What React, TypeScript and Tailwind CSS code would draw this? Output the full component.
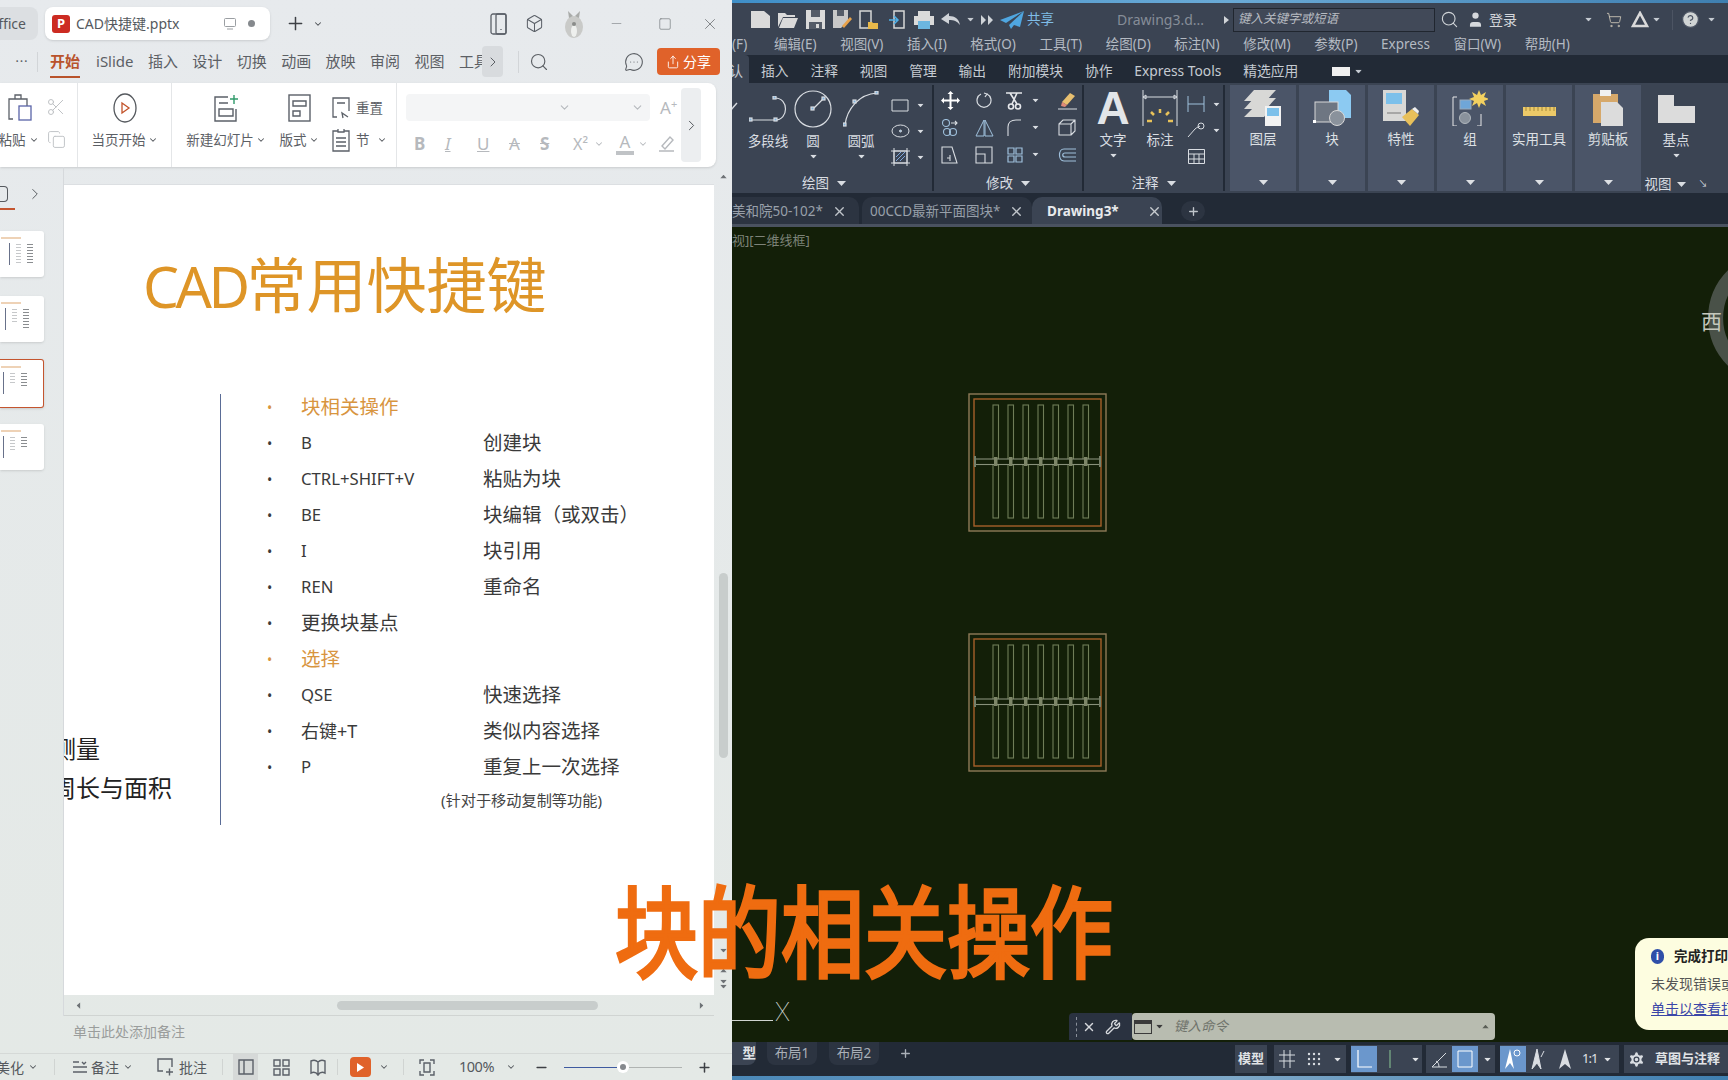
import React from 'react';
import { Plus, ChevronDown, ChevronRight, X, Minus, Square, Search, Box, Scissors, Copy, Share, MessageCircleMore, Settings, ShoppingCart, User, Wrench, CircleHelp } from 'lucide-react';

const Caret = ({ className = '' }: { className?: string }) => (
  <svg width="9" height="5" viewBox="0 0 9 5" className={`shrink-0 ${className}`}><path d="M0 0h9L4.5 5z" fill="currentColor" /></svg>
);

const Chev = ({ className = '' }: { className?: string }) => <ChevronDown size={10} strokeWidth={2.5} className={`shrink-0 text-[#55595e] ${className}`} />;

const Line = ({ d, s = '#5b6068', w = 24, h = 24, sw = 1.4 }: { d: string; s?: string; w?: number; h?: number; sw?: number }) => (
  <svg width={w} height={h} viewBox={`0 0 ${w} ${h}`} fill="none" stroke={s} strokeWidth={sw}><path d={d} /></svg>
);

const RibbonCol = ({ className, icon, label }: { className: string; icon: React.ReactNode; label: React.ReactNode }) => (
  <div className={`flex flex-col items-center pt-[9px] ${className}`}>
    <div className="flex h-[32px] items-center justify-center">{icon}</div>
    <div className="mt-[6px] flex h-[20px] items-center gap-[2px] whitespace-nowrap text-[13.5px] text-[#5c6065]">{label}</div>
  </div>
);

const MENU_TABS = ['iSlide', '插入', '设计', '切换', '动画', '放映', '审阅', '视图'];

const PptTop = () => (
  <>
    <div className="flex h-[47px] items-center">
      <div className="flex h-[33px] w-[38px] items-center justify-end overflow-hidden rounded-r-lg bg-[#dcdfe2] pr-[12px] text-[14px] text-[#55595e]"><span className="whitespace-nowrap">ffice</span></div>
      <div className="ml-[7px] flex h-[33px] w-[225px] items-center rounded-lg bg-white pl-[7px] shadow-sm">
        <div className="flex h-[18px] w-[18px] items-center justify-center rounded-[3px] bg-[#cc2b22] text-[13px] font-bold text-white">P</div>
        <span className="ml-[6px] w-[147px] text-[14px] text-[#55595e]">CAD快捷键.pptx</span>
        <svg width="14" height="14" viewBox="0 0 14 14" fill="none" stroke="#9a9ea2"><rect x="1.5" y="1.5" width="11" height="8" rx="1" /><path d="M4 12h6" /></svg>
        <span className="ml-[11px] h-[7px] w-[7px] rounded-full bg-[#85898d]" />
      </div>
      <Plus size={21} strokeWidth={1.7} className="ml-[15px] text-[#3d4045]" />
      <Chev className="ml-[7px] !text-[#4b4f54]" />
      <svg className="ml-[167px]" width="18" height="22" viewBox="0 0 18 22" fill="none" stroke="#5b6068" strokeWidth="1.3"><rect x="1" y="1" width="15" height="20" rx="2" /><rect x="6" y="1" width="10" height="20" rx="1.5" /><path d="M11 16v1" /></svg>
      <Box size={19} strokeWidth={1.3} className="ml-[17px] text-[#5b6068]" />
      <svg className="ml-[19px]" width="22" height="30" viewBox="0 0 22 30"><ellipse cx="11" cy="18" rx="9" ry="11" fill="#c9cac8" /><path d="M6 9 5 2l5 5zM16 9l1-7-5 5z" fill="#a9aba9" /><ellipse cx="11" cy="22" rx="3" ry="6" fill="#eef0ee" /><circle cx="11" cy="15" r="2" fill="#8a8c8a" /></svg>
      <Minus size={15} strokeWidth={1.2} className="ml-[24px] text-[#8d9195]" />
      <Square size={14} strokeWidth={1.1} className="ml-[34px] text-[#6e7276]" />
      <X size={18} strokeWidth={1.1} className="ml-[29px] text-[#6e7276]" />
    </div>
    <div className="flex h-[36px] items-center pb-[7px] text-[15px] text-[#5c6065]">
      <span className="ml-[7px] w-[30px] text-center text-[13px] tracking-[1px]">⋯</span>
      <span className="h-[20px] w-px bg-[#d2d5d8]" />
      <span className="relative ml-[12px] font-bold text-[#b9532c] after:absolute after:inset-x-0 after:bottom-[-5px] after:h-[2px] after:bg-[#b9532c]">开始</span>
      <div className="ml-[16px] flex w-[363px] gap-[14.4px]">
        {MENU_TABS.map(t => <span key={t}>{t}</span>)}
      </div>
      <div className="flex h-[31px] w-[44px] items-center overflow-hidden">
        <span className="w-[23px] shrink-0 overflow-hidden whitespace-nowrap">工具</span>
        <span className="flex h-[31px] w-[21px] shrink-0 items-center justify-center rounded-sm bg-[#d8dbde]"><ChevronRight size={16} strokeWidth={1.5} /></span>
      </div>
      <span className="ml-[15px] h-[22px] w-px bg-[#d2d5d8]" />
      <Search size={20} strokeWidth={1.4} className="ml-[10px]" />
      <MessageCircleMore size={20} strokeWidth={1.3} className="ml-[75px]" />
      <div className="ml-[13px] flex h-[27px] w-[63px] items-center justify-center gap-[3px] rounded bg-[#e0622a] text-[14px] text-white">
        <Share size={14} strokeWidth={1.5} />分享
      </div>
    </div>
  </>
);

const PptRibbon = () => (
  <div className="flex h-[84px] w-[716px] rounded-r-lg bg-white shadow-sm">
    <div className="flex w-[78px] border-r border-[#e4e6e8]">
      <RibbonCol className="w-[40px]" label={<><span className="ml-[-3px] w-[28px] overflow-hidden whitespace-nowrap">粘贴</span><Chev /></>} icon={
        <svg width="24" height="28" viewBox="0 0 24 28" fill="none" stroke="#5b6068" strokeWidth="1.3"><path d="M5 25H1V5h18v7M7 5V1h6v4" /><rect x="11" y="12" width="12" height="14" stroke="#5a64a8" /></svg>
      } />
      <div className="ml-[6px] flex flex-col items-center pt-[14px] text-[#bfc2c5]">
        <Scissors size={20} strokeWidth={1.2} />
        <Copy size={19} strokeWidth={1.2} className="mt-[13px]" />
      </div>
    </div>
    <RibbonCol className="w-[94px] border-r border-[#e4e6e8]" label={<>当页开始<Chev /></>} icon={
      <svg width="24" height="30" viewBox="0 0 24 30" fill="none"><ellipse cx="12" cy="15" rx="11" ry="14" stroke="#55595e" strokeWidth="1.3" /><path d="M9 10l7 5-7 5z" stroke="#c2532a" strokeWidth="1.3" /></svg>
    } />
    <RibbonCol className="w-[108px]" label={<>新建幻灯片<Chev /></>} icon={
      <svg width="24" height="28" viewBox="0 0 24 28" fill="none" stroke="#5b6068" strokeWidth="1.4"><path d="M14 3H1v24h21v-12M5 9h9M5 15h14v7H5z" /><path d="M20 1v9M16 5h9" stroke="#2f9a6a" /></svg>
    } />
    <RibbonCol className="w-[38px]" label={<>版式<Chev /></>} icon={
      <svg width="23" height="28" viewBox="0 0 23 28" fill="none" stroke="#5b6068" strokeWidth="1.4"><rect x="1" y="1" width="21" height="26" /><path d="M5 7h13v5H5zM5 17h7v5H5z" /></svg>
    } />
    <div className="ml-[14px] flex w-[58px] flex-col whitespace-nowrap pt-[11px] text-[13.5px] text-[#5c6065]">
      <div className="flex h-[28px] items-center gap-[6px]">
        <svg width="18" height="22" viewBox="0 0 18 22" fill="none" stroke="#5b6068" strokeWidth="1.3"><path d="M5 20H1V1h16v13M5 6h8M16 20l-6-4 1 5" /></svg>
        <span>重置</span>
      </div>
      <div className="mt-[8px] flex h-[20px] items-center gap-[6px]">
        <svg width="18" height="24" viewBox="0 0 18 24" fill="none" stroke="#5b6068" strokeWidth="1.3"><path d="M6 3H1v20h16V3h-5M6 1v3h6V1M4 10h10M4 14h10M4 18h10" /></svg>
        <span className="w-[14px]">节</span><Chev className="ml-[1px]" />
      </div>
    </div>
    <div className="ml-[6px] flex w-[285px] flex-col border-l border-[#e4e6e8] pl-[9px] pt-[11px] text-[#b6b9bd]">
      <div className="flex items-center">
        <div className="flex h-[27px] w-[244px] items-center rounded bg-[#f4f5f6]">
          <span className="flex w-[172px] justify-end pr-[7px]"><ChevronDown size={13} /></span>
          <span className="flex flex-1 justify-end pr-[6px]"><ChevronDown size={13} /></span>
        </div>
        <span className="ml-[10px] text-[17px]">A<sup className="text-[11px]">+</sup></span>
      </div>
      <div className="mt-[11px] flex h-[24px] items-center text-[17px]">
        <span className="ml-[8px] w-[31px] font-bold">B</span>
        <span className="w-[32px] italic underline">I</span>
        <span className="w-[32px] underline">U</span>
        <span className="w-[31px] line-through">A</span>
        <span className="w-[33px] font-bold line-through">S</span>
        <span className="w-[21px] text-[16px]">X²</span>
        <Chev className="!text-[#b6b9bd]" />
        <span className="ml-[12px] w-[18px] border-b-[4px] border-[#c0c3c6] text-center leading-[18px]">A</span>
        <Chev className="ml-[4px] !text-[#b6b9bd]" />
        <span className="ml-[9px]"><Line d="M2 17h15M5 12l8-9 3 3-8 9z" s="#b6b9bd" w={20} h={20} /></span>
      </div>
    </div>
    <div className="my-[5px] flex w-[20px] items-center justify-center rounded bg-[#eceef0] text-[#55595e]"><ChevronRight size={17} strokeWidth={1.4} /></div>
  </div>
);

const Thumb = ({ active, bar, c1, c2 }: { active?: boolean; bar: number; c1: number; c2: number }) => (
  <div className={`flex w-[44px] flex-col rounded-r-[3px] bg-white pt-[6px] shadow-sm ${active ? 'h-[49px] border border-l-0 border-[#c4552f]' : 'h-[46px]'}`}>
    <div className="ml-[1px] h-[2px] w-[20px] bg-[#eed2b6]" />
    <div className="mt-[4px] flex gap-[6px] pl-[3px]">
      <div className="h-[22px] w-px bg-[#68718a]" style={{ marginLeft: bar }} />
      <div className="flex flex-col gap-[2px] pt-[1px]">
        {Array.from({ length: c1 }).map((_, i) => <div key={i} className="h-px w-[5px] bg-[#c6c8ca]" />)}
      </div>
      <div className="flex flex-col gap-[2px] pt-[1px]">
        {Array.from({ length: c2 }).map((_, i) => <div key={i} className="h-px w-[6px] bg-[#8a8d90]" />)}
      </div>
    </div>
  </div>
);

const ROWS: [string, string?, boolean?][] = [
  ['块相关操作', undefined, true],
  ['B', '创建块'],
  ['CTRL+SHIFT+V', '粘贴为块'],
  ['BE', '块编辑（或双击）'],
  ['I', '块引用'],
  ['REN', '重命名'],
  ['更换块基点'],
  ['选择', undefined, true],
  ['QSE', '快速选择'],
  ['右键+T', '类似内容选择'],
  ['P', '重复上一次选择'],
];

const keyClass = (k: string) => (k === '右键+T' ? 'text-[18px]' : /^[A-Z+]+$/.test(k) ? 'text-[16.7px]' : 'text-[19.5px]');

const Slide = () => (
  <div className="h-[810px] w-[650px] overflow-hidden bg-white">
    <div className="ml-[79px] mt-[63px] h-[74px] whitespace-nowrap text-[60px] leading-[74px] text-[#de9527]">
      <span className="text-[57px] tracking-[-3.5px]">CAD</span><span>常用快捷键</span>
    </div>
    <div className="mt-[72px] flex">
      <div className="flex h-[431px] w-[156px] flex-col overflow-hidden pt-[335px] text-[24px] leading-[39px] text-[#222]">
        <span className="-ml-[12px] whitespace-nowrap">测量</span>
        <span className="-ml-[12px] whitespace-nowrap">周长与面积</span>
      </div>
      <div className="h-[431px] w-px bg-[#5a6c96]" />
      <div className="-mt-[5px] pl-[46px]">
        {ROWS.map(([a, b, hl]) => (
          <div key={a} className={`flex h-[36px] items-center ${hl ? 'text-[#d8953f]' : 'text-[#3a3a3a]'}`}>
            <span className="w-[34px] text-[14px]">•</span>
            <span className={`w-[182px] whitespace-nowrap ${keyClass(a)}`}>{a}</span>
            {b && <span className="whitespace-nowrap text-[19.5px]">{b}</span>}
          </div>
        ))}
        <div className="flex h-[30px] items-center pl-[174px] text-[15.2px] text-[#444]">(针对于移动复制等功能)</div>
      </div>
    </div>
  </div>
);

const PptPane = () => (
  <div className="flex w-[732px] flex-col bg-gradient-to-b from-[#e7eaed] to-[#e4e9e6]">
    <PptTop />
    <PptRibbon />
    <div className="flex h-[849px]">
      <div className="w-[64px] border-r border-[#d6d9dc]">
        <div className="flex h-[41px] items-center pt-[12px]">
          <span className="h-[16px] w-[8px] rounded-r-sm border border-l-0 border-[#55595e]" />
          <ChevronRight size={18} strokeWidth={1.3} className="ml-[18px] text-[#55595e]" />
        </div>
        <div className="h-[2px] w-[15px] bg-[#c4552f]" />
        <div className="mt-[21px] flex flex-col">
          <Thumb bar={6} c1={7} c2={7} />
          <div className="h-[19px]" />
          <Thumb bar={2} c1={5} c2={7} />
          <div className="h-[17px]" />
          <Thumb active bar={0} c1={4} c2={5} />
          <div className="h-[16px]" />
          <Thumb bar={0} c1={5} c2={4} />
        </div>
      </div>
      <div className="flex w-[650px] flex-col">
        <div className="h-[18px] border-b border-[#dcdfe2]" />
        <Slide />
        <div className="flex h-[21px] items-center border-b border-[#d0d4d2] text-[#6e7276]">
          <Caret className="ml-[10px] rotate-90 scale-75" />
          <div className="ml-[254px] h-[9px] w-[261px] rounded-full bg-[#c8cdcc]" />
          <Caret className="ml-[99px] -rotate-90 scale-75" />
        </div>
      </div>
      <div className="flex w-[18px] flex-col items-center text-[#6e7276]">
        <Caret className="mt-[7px] rotate-180 scale-75" />
        <div className="mt-[394px] h-[185px] w-[9px] rounded-full bg-[#c8cdcc]" />
        <Caret className="mt-[190px] scale-75" />
        <Caret className="mt-[10px] rotate-180 scale-75" />
        <Caret className="rotate-180 scale-75" />
        <Caret className="mt-[6px] scale-75" />
        <Caret className="scale-75" />
      </div>
    </div>
    <div className="ml-[64px] flex h-[37px] items-center pb-[6px] pl-[9px] text-[14px] text-[#9a9d9c]">单击此处添加备注</div>
    <div className="flex h-[27px] items-center border-t border-[#d5d9d7] text-[14px] text-[#55595e]">
      <span className="-ml-[4px] whitespace-nowrap">美化</span>
      <Chev className="ml-[4px]" />
      <span className="ml-[16px] h-[16px] w-px bg-[#d0d4d2]" />
      <span className="ml-[17px]"><Line d="M1 2h6M1 7h14M1 12h14M10 2l2 2 2-2" w={16} h={14} /></span>
      <span className="ml-[3px]">备注</span>
      <Chev className="ml-[4px]" />
      <span className="ml-[24px]"><Line d="M6 13H1V1h14v8M9 14h7M12.500 10.500v7" w={17} h={18} /></span>
      <span className="ml-[5px]">批注</span>
      <span className="ml-[15px] h-[16px] w-px bg-[#d0d4d2]" />
      <span className="ml-[10px] flex h-[27px] w-[25px] items-center justify-center bg-[#d6d9d8]"><Line d="M1 1h14v14H1zM6 1v14" w={16} h={16} /></span>
      <span className="ml-[15px]"><Line d="M1 1h6v6H1zM10 1h6v6h-6zM1 10h6v6H1zM10 10h6v6h-6z" w={17} h={17} /></span>
      <span className="ml-[20px]"><Line d="M8 3C6 1 3 1 1 2v12c2-1 5-1 7 2 2-3 5-3 7-2V2c-2-1-5-1-7 1zM8 3v13" w={16} h={17} /></span>
      <span className="ml-[11px] h-[16px] w-px bg-[#d0d4d2]" />
      <span className="ml-[12px] flex h-[20px] w-[21px] items-center justify-center rounded-sm bg-[#e0622a]"><svg width="7" height="9" viewBox="0 0 7 9"><path d="M0 0l7 4.500L0 9z" fill="#fff" /></svg></span>
      <Chev className="ml-[8px]" />
      <span className="ml-[14px] h-[16px] w-px bg-[#d0d4d2]" />
      <span className="ml-[15px]"><Line d="M1 5V1h4M11 1h4v4M15 12v4h-4M5 16H1v-4M5 4h6v9H5z" w={16} h={17} /></span>
      <span className="ml-[24px] text-[14.500px] tracking-[-0.5px]">100%</span>
      <Chev className="ml-[12px]" />
      <Minus size={15} strokeWidth={2.4} className="ml-[18px] text-[#3d4045]" />
      <div className="ml-[15px] flex w-[118px] items-center">
        <div className="h-px w-[53px] bg-[#3e5aa0]" />
        <div className="flex h-[12px] w-[12px] items-center justify-center rounded-full bg-white"><span className="h-[6px] w-[6px] rounded-full bg-[#85898d]" /></div>
        <div className="h-px flex-1 bg-[#b0b4b2]" />
      </div>
      <Plus size={15} strokeWidth={2.4} className="ml-[15px] text-[#3d4045]" />
    </div>
  </div>
);

/* ---------- CAD side ---------- */

const CAD_MENU = ['编辑(E)', '视图(V)', '插入(I)', '格式(O)', '工具(T)', '绘图(D)', '标注(N)', '修改(M)', '参数(P)', 'Express', '窗口(W)', '帮助(H)'];
const CAD_TABS = ['插入', '注释', '视图', '管理', '输出', '附加模块', '协作', 'Express Tools', '精选应用'];

const CadTop = () => (
  <>
    <div className="flex h-[30px] items-center bg-[#3b4453] pl-[14px] pt-[3px] text-[13px] text-[#c5cbd2]">
      <span className="flex w-[28px] justify-center"><svg width="19" height="17" viewBox="0 0 19 17"><path d="M0 0h13l6 5v12H0z" fill="#dadada" /></svg></span>
      <span className="flex w-[27px] justify-center"><svg width="20" height="17" viewBox="0 0 20 17"><path d="M0 2h7l2 2h8v2H5L0 16zM5 7h15l-4 10H1z" fill="#dadada" /></svg></span>
      <span className="flex w-[28px] justify-center"><svg width="19" height="19" viewBox="0 0 19 19"><path d="M0 0h19v19H0z" fill="#dadada" /><path d="M5 0h9v7H5zM3 12h13v7H3z" fill="#555c68" /><path d="M10 14h3v4h-3z" fill="#dadada" /></svg></span>
      <span className="flex w-[26px] justify-center"><svg width="19" height="19" viewBox="0 0 19 19"><path d="M0 0h15v11l-7 7H0z" fill="#c8c8c8" /><path d="M4 0h7v6H4z" fill="#555c68" /><path d="M9 16l8-9 2 2-8 9z" fill="#e8a24a" /></svg></span>
      <span className="flex w-[28px] justify-center"><svg width="20" height="20" viewBox="0 0 20 20"><rect x="1" y="1" width="11" height="17" fill="none" stroke="#d8d8d8" strokeWidth="1.5" /><path d="M9 12h4l1 1h5v6H9z" fill="#e8b84a" /></svg></span>
      <span className="flex w-[27px] justify-center"><svg width="16" height="20" viewBox="0 0 16 20" fill="none" stroke="#d8d8d8" strokeWidth="1.500"><rect x="5" y="1" width="10" height="17" /><path d="M0 10h8M5 6l4 4-4 4" stroke="#4fb0e8" /></svg></span>
      <span className="flex w-[27px] justify-center"><svg width="20" height="18" viewBox="0 0 20 18"><path d="M4 0h12v5H4zM0 5h20v9H0z" fill="#dadada" /><path d="M4 10h12v8H4z" fill="#6cb6e0" /></svg></span>
      <span className="flex w-[26px] justify-center"><svg width="19" height="13" viewBox="0 0 19 13"><path d="M0 6l8-6v3c6 0 10 3 11 9-3-4-6-5-11-5v4z" fill="#cfd3d8" /></svg></span>
      <span className="flex w-[14px] justify-center"><Caret className="scale-75" /></span>
      <span className="flex w-[20px] justify-center"><svg width="12" height="10" viewBox="0 0 12 10"><path d="M0 0l5 5-5 5zM7 0l5 5-5 5z" fill="#cfd3d8" /></svg></span>
      <span className="ml-[3px]"><svg width="24" height="18" viewBox="0 0 24 18"><path d="M24 0L0 9l6 3L24 0 9 14l2 4 3-4 6 2z" fill="#4fa6e0" /></svg></span>
      <span className="ml-[3px] text-[13.500px] text-[#7fbce6]">共享</span>
      <span className="ml-[63px] w-[107px] text-[14px] text-[#868d98]">Drawing3.d...</span>
      <svg width="5" height="8" viewBox="0 0 5 8"><path d="M0 0l5 4-5 4z" fill="#d0d4d8" /></svg>
      <div className="ml-[4px] flex h-[24px] w-[202px] items-center border border-[#20262f] bg-[#414958] pl-[4px] text-[12.500px] italic text-[#b8bcc2]">键入关键字或短语</div>
      <Search size={19} strokeWidth={1.4} className="ml-[5px] text-[#d0d4d8]" />
      <User size={19} fill="#d5d8dc" strokeWidth={0} className="ml-[7px]" />
      <span className="ml-[4px] text-[14px] text-[#d5d8dc]">登录</span>
      <Caret className="ml-[67px] scale-75" />
      <ShoppingCart size={16} strokeWidth={1.3} className="ml-[13px] text-[#d0c8b8]" />
      <svg className="ml-[9px]" width="18" height="17" viewBox="0 0 18 17" fill="none" stroke="#dadada" strokeWidth="2.600"><path d="M9 2L2 15h14z" /></svg>
      <Caret className="ml-[3px] scale-75" />
      <span className="ml-[11px] h-[20px] w-px bg-[#4c5463]" />
      <CircleHelp size={19} fill="#d0d4d4" stroke="#4c5463" strokeWidth={1.6} className="ml-[8px]" />
      <Caret className="ml-[7px] scale-75" />
    </div>
    <div className="flex h-[22px] items-center whitespace-nowrap bg-[#3b4453] text-[13.500px] text-[#b4bac2]">
      <span className="w-[19px]">(F)</span>
      <div className="ml-[23px] flex gap-[23.600px]">{CAD_MENU.map(m => <span key={m}>{m}</span>)}</div>
    </div>
    <div className="flex h-[28px] items-center whitespace-nowrap bg-[#222a36] pt-[4px] text-[13.800px] text-[#c5cbd2]">
      <span className="-mt-[4px] flex h-[28px] w-[17px] items-center justify-start rounded-tr bg-[#3b4453] pt-[4px]"><span className="flex w-[11px] justify-end overflow-hidden"><span className="shrink-0">认</span></span></span>
      <div className="ml-[12px] flex gap-[21.800px]">{CAD_TABS.map(t => <span key={t}>{t}</span>)}</div>
      <span className="ml-[34px] h-[9px] w-[18px] bg-[#f0f0f0]" />
      <Caret className="ml-[4px] scale-75" />
    </div>
  </>
);

const W = '#d9dde2';

const SmallTool = ({ icon, caret }: { icon: React.ReactNode; caret?: boolean }) => (
  <div className="flex h-[27px] items-center">
    <span className="flex w-[24px] justify-center">{icon}</span>
    {caret && <Caret className="ml-[4px] scale-[0.7] text-[#d9dde2]" />}
  </div>
);

const BigTool = ({ className, icon, label, caret = true }: { className: string; icon: React.ReactNode; label: string; caret?: boolean }) => (
  <div className={`flex flex-col items-center ${className}`}>
    <div className="flex h-[40px] items-center justify-center">{icon}</div>
    <span className="mt-[2px] text-[13.500px] leading-[20px] text-[#d9dde2]">{label}</span>
    {caret && <Caret className="mt-[3px] scale-75 text-[#d9dde2]" />}
  </div>
);

const PanelFoot = ({ label, className = '' }: { label: string; className?: string }) => (
  <div className={`flex h-[21px] items-center justify-center gap-[8px] pt-[6px] text-[13.500px] text-[#d9dde2] ${className}`}>{label}<Caret /></div>
);

const Collapsed = ({ label, icon }: { label: string; icon: React.ReactNode }) => (
  <div className="flex w-[66px] flex-col items-center bg-[#4b5568]">
    <div className="flex h-[41px] items-end justify-center">{icon}</div>
    <span className="mt-[3px] whitespace-nowrap text-[13.500px] leading-[20px] text-[#dde0e4]">{label}</span>
    <Caret className="mt-auto mb-[6px] text-[#dde0e4]" />
  </div>
);

const CadRibbon = () => (
  <div className="flex h-[110px] bg-[#3b4453] py-[2px]">
    <div className="flex w-[202px] flex-col border-r-2 border-[#222a36]">
      <div className="flex h-[85px] pt-[4px]">
        <BigTool className="w-[8px] overflow-hidden" caret={false} label="" icon={<Line d="M-3 15L5 6" s={W} w={8} h={24} />} />
        <BigTool className="ml-[7px] w-[42px]" caret={false} label="多段线" icon={
          <svg width="38" height="26" viewBox="0 0 38 26" fill="none" stroke={W} strokeWidth="1.2"><path d="M2 24h24c14 0 14-22 0-22" /><rect x="0" y="22" width="3" height="3" fill="#7fb2dc" /><rect x="25" y="22" width="3" height="3" fill="#7fb2dc" /><rect x="24" y="0" width="3" height="3" fill="#7fb2dc" /></svg>
        } />
        <BigTool className="ml-[5px] w-[38px]" label="圆" icon={
          <svg width="38" height="38" viewBox="0 0 38 38" fill="none" stroke={W} strokeWidth="1.2"><circle cx="19" cy="19" r="18" /><path d="M19 19L29 9" /><rect x="17" y="17" width="3" height="3" fill="#7fb2dc" /><rect x="28" y="7" width="3" height="3" fill="#7fb2dc" /></svg>
        } />
        <BigTool className="ml-[10px] w-[38px]" label="圆弧" icon={
          <svg width="36" height="36" viewBox="0 0 36 36" fill="none" stroke={W} strokeWidth="1.2"><path d="M2 34C4 18 16 3 34 2" /><rect x="0" y="32" width="3" height="3" fill="#7fb2dc" /><rect x="10" y="9" width="3" height="3" fill="#7fb2dc" /><rect x="32" y="0" width="3" height="3" fill="#7fb2dc" /></svg>
        } />
        <div className="ml-[8px] flex flex-col pt-[3px]">
          <SmallTool caret icon={<svg width="18" height="13" fill="none" stroke={W}><path d="M1 1h16v11H1z" /></svg>} />
          <SmallTool caret icon={<svg width="19" height="14" fill="none" stroke={W}><ellipse cx="9.500" cy="7" rx="8.500" ry="6" /><circle cx="9.500" cy="7" r="1" fill="#7fb2dc" /></svg>} />
          <SmallTool caret icon={<svg width="19" height="18" fill="none" stroke={W}><path d="M3 3h13v12H3z" /><path d="M5 13l9-9M5 9l5-5M9 13l5-5" stroke="#7fa6d8" /><path d="M0 3h19M0 15h19M3 0v18M16 0v18" /></svg>} />
        </div>
      </div>
      <PanelFoot label="绘图" className="pr-[16px]" />
    </div>
    <div className="flex w-[150px] flex-col border-r-2 border-[#222a36]">
      <div className="grid h-[85px] grid-cols-[34px_31px_52px_24px] content-center pl-[4px]">
        <SmallTool icon={<svg width="19" height="19" viewBox="0 0 19 19"><path d="M9.500 0l3 3h-2v5.500H16v-2l3 3-3 3v-2h-5.500V16h2l-3 3-3-3h2v-5.500H3v2l-3-3 3-3v2h5.500V3h-2z" fill="#fff" /></svg>} />
        <SmallTool icon={<svg width="17" height="17" viewBox="0 0 17 17" fill="none" stroke={W} strokeWidth="1.200"><path d="M11 2a7 7 0 1 1-6 0" /><path d="M8 1l3 1-2 3" /></svg>} />
        <SmallTool caret icon={<svg width="18" height="18" viewBox="0 0 18 18" fill="none" stroke="#e6e8ec" strokeWidth="1.600"><path d="M0 1h16M4 1l7 11M11 1L6 12" /><circle cx="5" cy="14.500" r="2.500" /><circle cx="12" cy="14.500" r="2.500" /></svg>} />
        <SmallTool icon={<svg width="19" height="18" viewBox="0 0 19 18"><path d="M12 1l5 3-8 9-5-3z" fill="#e8c070" /><path d="M4 10l5 3-2 2-4-1z" fill="#e08a78" /><path d="M0 17h19" stroke={W} /></svg>} />
        <SmallTool icon={<svg width="19" height="18" viewBox="0 0 19 18" fill="none" stroke="#9fc0dc" strokeWidth="1.100"><circle cx="5" cy="4" r="3.500" /><circle cx="6" cy="13" r="3.500" /><circle cx="12" cy="13" r="3.500" /><path d="M10 4h6M14 2l2 2-2 2" stroke={W} /></svg>} />
        <SmallTool icon={<svg width="19" height="18" viewBox="0 0 19 18" fill="none" stroke="#9fc0dc"><path d="M9 1L1 17h8zM10 1l8 16h-8z" /></svg>} />
        <SmallTool caret icon={<Line d="M1 17V8c0-4 3-7 8-7h5" s={W} w={16} h={18} sw={1.1} />} />
        <SmallTool icon={<svg width="18" height="17" viewBox="0 0 18 17" fill="none" stroke={W} strokeWidth="1.100"><path d="M1 5h12v11H1zM1 5l4-4h12v11l-4 4M13 5l4-4" /></svg>} />
        <SmallTool icon={<svg width="18" height="18" viewBox="0 0 18 18" fill="none" stroke={W} strokeWidth="1.100"><path d="M1 1h10l5 16H1zM9 9v6M6 12h3" /></svg>} />
        <SmallTool icon={<svg width="18" height="18" viewBox="0 0 18 18" fill="none" stroke={W} strokeWidth="1.100"><path d="M1 1h16v16H1zM1 8h9v9" /></svg>} />
        <SmallTool caret icon={<svg width="16" height="16" viewBox="0 0 16 16" fill="none" stroke="#9fc0dc" strokeWidth="1.200"><path d="M1 1h6v6H1zM9 1h6v6H9zM1 9h6v6H1zM9 9h6v6H9z" /></svg>} />
        <SmallTool icon={<svg width="18" height="14" viewBox="0 0 18 14" fill="none" stroke="#9fc0dc" strokeWidth="1.200"><path d="M18 1H6C0 1 0 13 6 13h12M18 5H7C4 5 4 9 7 9h11" /></svg>} />
      </div>
      <PanelFoot label="修改" />
    </div>
    <div className="flex w-[141px] flex-col border-r-2 border-[#222a36]">
      <div className="flex h-[85px] pt-[3px]">
        <BigTool className="w-[58px]" label="文字" icon={<span className="font-['Liberation_Sans'] text-[46px] font-bold leading-[44px] text-[#e2e5e8]">A</span>} />
        <BigTool className="w-[36px]" caret={false} label="标注" icon={
          <svg width="36" height="36" viewBox="0 0 36 36" fill="none" stroke={W}><path d="M1 0v36M35 0v36M1 7h34M1 7l3-2v4zM35 7l-3-2v4z" /><path d="M18 19v4M9 22l3 3M27 22l-3 3M5 31h5M26 31h5" stroke="#e8c25a" strokeWidth="2.500" /></svg>
        } />
        <div className="ml-[6px] flex flex-col pt-[3px]">
          <SmallTool caret icon={<svg width="18" height="16" fill="none" stroke="#9fc0dc"><path d="M1 0v16M17 0v16M1 8h16" /></svg>} />
          <SmallTool caret icon={<svg width="18" height="16" fill="none" stroke={W}><path d="M1 15l7-8c2-2 4-2 5-3" /><circle cx="14" cy="4" r="3" /></svg>} />
          <SmallTool icon={<svg width="17" height="15" fill="none" stroke={W}><path d="M.5.5h16v14H.5zM.5 5h16M.5 10h16M6 5v10M11 5v10" /></svg>} />
        </div>
      </div>
      <PanelFoot label="注释" />
    </div>
    <div className="ml-[5px] flex gap-[3px]">
      <Collapsed label="图层" icon={<svg width="38" height="36" viewBox="0 0 38 36"><path d="M10 0h22L22 11H0zM10 8h22L22 19H0zM10 17h18l-8 10H0z" fill="#d8d8d6" /><rect x="21" y="16" width="16" height="20" fill="#f2f2f2" /><rect x="23" y="18" width="12" height="8" fill="#7cc0ea" /></svg>} />
      <Collapsed label="块" icon={<svg width="38" height="36" viewBox="0 0 38 36"><path d="M16 0h17l5 5v23H16z" fill="#8ccaf2" /><rect x="2" y="12" width="23" height="20" fill="#6e7682" stroke="#d8d8d8" /><circle cx="24" cy="28" r="7.500" fill="#8a929c" stroke="#d8d8d8" /><rect x="0" y="30" width="3" height="3" fill="#fff" /></svg>} />
      <Collapsed label="特性" icon={<svg width="36" height="36" viewBox="0 0 36 36"><rect x="0" y="0" width="23" height="31" fill="#d8d8d6" /><rect x="3" y="3" width="16" height="11" fill="#7cc0ea" /><path d="M4 23h14" stroke="#777" /><path d="M19 27l10-8 7 6-9 11z" fill="#e8c05a" /><path d="M29 19l3-2 4 4-1 3z" fill="#f0f0f0" /></svg>} />
      <Collapsed label="组" icon={<svg width="36" height="36" viewBox="0 0 36 36" fill="none"><path d="M5 7H1v29h4M25 36h4V24" stroke="#e8e8e8" /><rect x="8" y="10" width="11" height="9" fill="#6fa6d8" stroke="#9ab" /><circle cx="13" cy="28" r="5.500" fill="#8a929c" stroke="#b0b6bc" /><path d="M27 0l2 5 5-3-2 5 5 2-5 2 2 5-5-3-2 5-2-5-5 3 2-5-5-2 5-2-2-5 5 3z" fill="#f2d060" /></svg>} />
      <Collapsed label="实用工具" icon={<svg className="mb-[10px]" width="33" height="9" viewBox="0 0 33 9"><rect width="33" height="9" fill="#ecc968" /><path d="M3 0v4M7 0v4M11 0v4M15 0v4M19 0v4M23 0v4M27 0v4M31 0v4" stroke="#a68a3a" /></svg>} />
      <Collapsed label="剪贴板" icon={<svg width="30" height="36" viewBox="0 0 30 36"><rect x="0" y="4" width="25" height="29" fill="#d6a86a" /><rect x="7" y="0" width="11" height="6" fill="#f0f0f0" /><path d="M8 12h16l6 6v18H8z" fill="#dcdcdc" /></svg>} />
      <div className="flex w-[64px] flex-col items-center">
        <div className="flex h-[38px] items-end"><svg width="37" height="28" viewBox="0 0 37 28"><path d="M0 0h16v11h21v17H0z" fill="#dcdcdc" /></svg></div>
        <span className="mt-[7px] text-[13.500px] leading-[20px] text-[#d9dde2]">基点</span>
        <Caret className="mt-[3px] scale-75 text-[#d9dde2]" />
        <div className="mt-auto flex h-[14px] items-center gap-[6px] whitespace-nowrap text-[13.500px] text-[#d9dde2]">视图<Caret /><span className="ml-[6px] text-[9px]">↘</span></div>
      </div>
    </div>
  </div>
);

const CadTabs = () => (
  <div className="flex h-[31px] items-end whitespace-nowrap bg-[#222a36] text-[13.500px] text-[#98a0aa]">
    <div className="flex h-[27px] w-[127px] items-center rounded-tr-[10px] bg-[#2c3441] pt-[2px]">
      <span>美和院50-102*</span>
      <X size={15} strokeWidth={2.2} className="ml-[9px] text-[#c0c5cb]" />
    </div>
    <div className="ml-[3px] flex h-[27px] w-[170px] items-center rounded-t-[10px] bg-[#2c3441] pl-[8px] pt-[2px]">
      <span className="w-[139px]">00CCD最新平面图块*</span>
      <X size={15} strokeWidth={2.2} className="text-[#c0c5cb]" />
    </div>
    <div className="flex h-[27px] w-[130px] items-center rounded-t-[10px] bg-[#3b4453] pl-[15px] pt-[2px] font-bold text-[#e8eaec]">
      <span className="w-[100px]">Drawing3*</span>
      <X size={15} strokeWidth={2.2} className="text-[#c8ccd0]" />
    </div>
    <span className="mb-[3px] ml-[19px] flex h-[20px] w-[24px] items-center justify-center rounded-full bg-[#2c3441]"><Plus size={13} strokeWidth={2.5} className="text-[#c0c5cb]" /></span>
  </div>
);

const BLOCK_BARS = [25, 40, 55, 70, 85, 100, 115];

const CadBlock = ({ className }: { className: string }) => (
  <svg className={`block ${className}`} width="140" height="140" viewBox="0 0 140 140" fill="none">
    <rect x="1" y="1" width="137" height="137" stroke="#8f7b58" strokeWidth="1.400" />
    <rect x="6" y="6" width="127" height="127" stroke="#a5602a" strokeWidth="1.400" />
    {BLOCK_BARS.map(x => <rect key={x} x={x} y="12" width="5.500" height="113" stroke="#6f7d58" strokeWidth="1.100" />)}
    <rect x="7" y="66" width="125" height="5.500" fill="#131f08" stroke="#88907a" strokeWidth="1.100" />
    {BLOCK_BARS.map(x => <rect key={x} x={x + 1} y="64" width="3.500" height="9" fill="#7d8668" />)}
    <path d="M7 63v11M132 63v11" stroke="#77806a" strokeWidth="2" />
  </svg>
);

const Canvas = () => (
  <div className="flex-1 overflow-hidden border-t-[3px] border-[#4a5260] bg-[#131f08]">
    <div className="mt-[4px] h-[20px] whitespace-nowrap text-[13px] text-[#7d8378]">视][二维线框]</div>
    <CadBlock className="ml-[236px] mt-[142px]" />
    <CadBlock className="ml-[236px] mt-[100px]" />
    <div className="mt-[227px] flex h-[40px] items-start">
      <span className="mt-[20px] h-px w-[41px] bg-[#d0d4d0]" />
      <span className="ml-[2px] font-['Roboto'] text-[25px] font-thin leading-[26px] text-[#e0e4e0]">X</span>
      <div className="ml-[279px] mt-[13px] flex h-[27px] w-[426px]">
        <div className="flex w-[63px] items-center rounded-tl-sm bg-[#2a3240] pl-[7px] text-[#d5d8dc]">
          <span className="h-[20px] border-l border-dashed border-[#8a909a]" />
          <X size={14} strokeWidth={2.5} className="ml-[5px]" />
          <Wrench size={16} strokeWidth={2} className="ml-[9px]" />
        </div>
        <div className="flex flex-1 items-center rounded-sm bg-[#b8bcb0] pl-[2px] pr-[5px]">
          <span className="flex h-[14px] w-[18px] flex-col border border-[#3a3a3a] bg-[#b8bcb0]"><span className="h-[3px] bg-[#3a3a3a]" /></span>
          <Caret className="ml-[3px] scale-75 text-[#3a3a3a]" />
          <span className="ml-[10px] text-[13.500px] italic text-[#70746c]">键入命令</span>
          <Caret className="ml-auto rotate-180 scale-75 text-[#5a5e56]" />
        </div>
      </div>
    </div>
  </div>
);

const StatusBtn = ({ on, children }: { on?: boolean; children: React.ReactNode }) => (
  <span className={`flex h-[26px] w-[26px] items-center justify-center ${on ? 'bg-[#6b97cc]' : ''}`}>{children}</span>
);

const CadStatus = () => (
  <div className="flex h-[34px] items-center whitespace-nowrap bg-[#222a36] text-[13.500px] text-[#aab0b8]">
    <div className="flex h-[34px] items-start">
      <span className="flex h-[23px] w-[24px] items-center justify-end rounded-br-lg bg-[#3b4453] font-bold text-[#e0e3e6]">型</span>
      <span className="ml-[11px] flex h-[23px] w-[50px] items-center justify-center rounded-b-lg bg-[#2c3441]">布局1</span>
      <span className="ml-[12px] flex h-[23px] w-[50px] items-center justify-center rounded-b-lg bg-[#2c3441]">布局2</span>
      <Plus size={13} strokeWidth={2.5} className="ml-[20px] mt-[5px]" />
    </div>
    <div className="ml-[323px] flex h-[28px] items-center gap-[7px] text-[#e0e3e6]">
      <span className="flex h-[28px] w-[32px] items-center justify-center bg-[#3b4453] text-[13px] font-bold">模型</span>
      <div className="flex h-[28px] w-[72px] items-center gap-px bg-[#3b4453]">
        <StatusBtn><Line d="M5 0v18M11 0v18M0 5h16M0 11h16" s={W} w={16} h={18} sw={1} /></StatusBtn>
        <StatusBtn><svg width="14" height="14" fill={W}><circle cx="2" cy="2" r="1.200" /><circle cx="7" cy="2" r="1.200" /><circle cx="12" cy="2" r="1.200" /><circle cx="2" cy="7" r="1.200" /><circle cx="7" cy="7" r="1.200" /><circle cx="12" cy="7" r="1.200" /><circle cx="2" cy="12" r="1.200" /><circle cx="7" cy="12" r="1.200" /><circle cx="12" cy="12" r="1.200" /></svg></StatusBtn>
        <Caret className="ml-[5px] scale-75" />
      </div>
      <div className="-ml-[2px] flex h-[28px] w-[71px] items-center bg-[#3b4453]">
        <StatusBtn on><Line d="M2 0v17h14" s="#fff" w={17} h={18} sw={1.2} /></StatusBtn>
        <StatusBtn><Line d="M8 0v18" s="#7fb28a" w={16} h={18} sw={1.2} /></StatusBtn>
        <Caret className="ml-[8px] scale-75" />
      </div>
      <div className="-ml-[3px] flex h-[28px] w-[69px] items-center bg-[#3b4453]">
        <StatusBtn><Line d="M1 17L15 3M1 17h15M8 17c0-3-1-5-3-6" s={W} w={16} h={18} sw={1} /></StatusBtn>
        <StatusBtn on><Line d="M1 1h14v16H1z" s="#fff" w={16} h={18} sw={1} /></StatusBtn>
        <Caret className="ml-[5px] scale-75" />
      </div>
      <div className="-ml-[2px] flex h-[28px] w-[119px] items-center bg-[#3b4453]">
        <StatusBtn on><svg width="18" height="20" viewBox="0 0 18 20"><path d="M6 0l4 20-4-6-5 6z" fill="#fff" /><circle cx="13" cy="4" r="3" fill="none" stroke="#fff" /></svg></StatusBtn>
        <StatusBtn><svg width="18" height="20" viewBox="0 0 18 20"><path d="M7 0l4 20-4-6-5 6zM14 2l-3 6" fill={W} stroke={W} /></svg></StatusBtn>
        <StatusBtn><svg width="16" height="20" viewBox="0 0 16 20"><path d="M8 0l6 20-6-5-6 5z" fill={W} /></svg></StatusBtn>
        <span className="ml-[4px] text-[13px] tracking-[-1px]">1:1</span>
        <Caret className="ml-[6px] scale-75" />
      </div>
      <div className="-ml-[2px] flex h-[28px] w-[110px] items-center bg-[#3b4453] pl-[3px]">
        <Settings size={19} fill="#d9dde2" stroke="#3b4453" strokeWidth={1.600} />
        <span className="ml-[9px] text-[13px] font-bold">草图与注释</span>
      </div>
    </div>
  </div>
);

const App = () => (
  <div className="relative flex h-[1080px] w-[1728px] overflow-hidden bg-white font-['Noto_Sans','Noto_Sans_CJK_SC',sans-serif]">
    <PptPane />
    <div className="flex w-[996px] flex-col bg-[#222a36]">
      <div className="h-[3px] bg-gradient-to-r from-[#3f8fc8] via-[#6aaad6] to-[#3f7fb0]" />
      <CadTop />
      <CadRibbon />
      <CadTabs />
      <Canvas />
      <CadStatus />
      <div className="h-[4px] bg-gradient-to-r from-[#4a88b8] via-[#7ea8c8] to-[#3f7fb0]" />
    </div>

    {/* subtitle burned over both windows */}
    <div className="absolute left-[615px] top-[876px] origin-top scale-y-[1.2] whitespace-nowrap text-[83px] font-normal leading-[92px] text-[#ef6c10] [-webkit-text-stroke:3px_#ef6c10]">块的相关操作</div>

    {/* viewcube ring, cut by the window edge */}
    <svg className="absolute right-0 top-[268px]" width="24" height="100" viewBox="0 0 24 100" fill="none">
      <circle cx="71.600" cy="50" r="60" stroke="#495148" strokeWidth="15" />
    </svg>
    <span className="absolute left-[1701px] top-[306px] text-[21px] text-[#c4c8bc]">西</span>

    {/* print notification */}
    <div className="absolute left-[1635px] top-[938px] h-[92px] w-[93px] overflow-hidden whitespace-nowrap rounded-l-[14px] bg-[#fdfde0] pl-[16px] pt-[8px] text-[14px]">
      <div className="flex h-[21px] items-center">
        <span className="flex h-[15px] w-[15px] items-center justify-center rounded-full bg-[#2f4fa8] text-[11px] font-bold text-white">i</span>
        <span className="ml-[10px] text-[13.500px] font-bold text-[#222]">完成打印</span>
      </div>
      <div className="mt-[6px] text-[#555]">未发现错误或</div>
      <div className="mt-[4px] text-[#3a46a8] underline">单击以查看打</div>
    </div>
  </div>
);

export default App;
